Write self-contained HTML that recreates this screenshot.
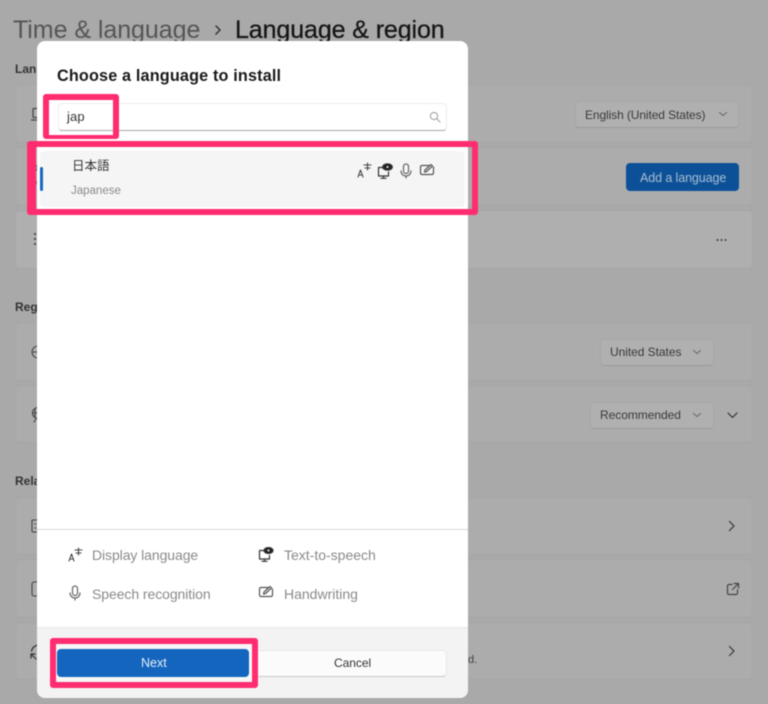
<!DOCTYPE html>
<html><head><meta charset="utf-8"><style>
html,body{margin:0;padding:0;width:768px;height:704px;overflow:hidden;background:#a9a9a9}
#r{position:absolute;left:0;top:0;width:768px;height:704px;overflow:hidden;font-family:"Liberation Sans","Noto Sans CJK JP",sans-serif;filter:blur(.5px)}
.a{position:absolute;box-sizing:border-box}
.t{position:absolute;white-space:nowrap;line-height:1}
.c{position:absolute;left:15px;width:738px;background:#acacac;border:1px solid #a5a5a5;border-radius:4px;box-sizing:border-box}
.b{position:absolute;background:#b0b0b0;border:1px solid #a6a6a6;border-bottom:1px solid #9b9b9b;border-radius:4px;box-sizing:border-box}
.p{position:absolute;box-sizing:border-box;border:6px solid #ff2d6f;border-radius:3px}
svg{position:absolute;fill:none;stroke-linecap:round;stroke-linejoin:round}
</style></head><body><div id="r">
<div class="t" style="left:13px;top:18px;font-size:25px;color:#555;letter-spacing:-.05px">Time &amp; language</div>
<svg style="left:212px;top:23px" width="12" height="14" stroke="#333" stroke-width="1.5"><path d="M4 3l4 4-4 4"/></svg>
<div class="t" style="left:235px;top:18px;font-size:25px;color:#161616;letter-spacing:-.1px;-webkit-text-stroke:.3px #161616">Language &amp; region</div>
<div class="t" style="left:15px;top:63px;font-size:12px;font-weight:bold;color:#333">Language</div>
<div class="t" style="left:15px;top:301px;font-size:12px;font-weight:bold;color:#333">Region</div>
<div class="t" style="left:15px;top:475px;font-size:12px;font-weight:bold;color:#333">Related</div>
<div class="c" style="top:84px;height:59px"></div>
<div class="c" style="top:147px;height:59px"></div>
<div class="c" style="top:210px;height:59px;background:#afafaf"></div>
<div class="c" style="top:322px;height:59px"></div>
<div class="c" style="top:385px;height:58px"></div>
<div class="c" style="top:497px;height:58px"></div>
<div class="c" style="top:559px;height:59px"></div>
<div class="c" style="top:622px;height:58px"></div>

<div class="b" style="left:575px;top:101px;width:164px;height:27px"></div>
<div class="t" style="left:585px;top:109px;font-size:12px;color:#3a3a3a;letter-spacing:-.1px">English (United States)</div>
<svg style="left:717px;top:110px" width="12" height="8" stroke="#666" stroke-width="1"><path d="M2.500 2.500l3.500 3 3.500-3"/></svg>
<div class="a" style="left:626px;top:163px;width:113px;height:28px;background:#0c5197;border-radius:4px"></div>
<div class="t" style="left:640px;top:172px;font-size:12.500px;color:#a9bdd3;letter-spacing:-.1px">Add a language</div>
<svg style="left:715px;top:237px" width="14" height="6"><circle cx="2.500" cy="3" r=".9" fill="#222"/><circle cx="6.500" cy="3" r=".9" fill="#222"/><circle cx="10.500" cy="3" r=".9" fill="#222"/></svg>

<div class="b" style="left:600px;top:339px;width:114px;height:27px"></div>
<div class="t" style="left:610px;top:346px;font-size:12px;color:#3a3a3a;letter-spacing:-.05px">United States</div>
<svg style="left:691px;top:348px" width="12" height="8" stroke="#666" stroke-width="1"><path d="M2.500 2.500l3.500 3 3.500-3"/></svg>
<div class="b" style="left:590px;top:402px;width:124px;height:27px"></div>
<div class="t" style="left:600px;top:409px;font-size:12px;color:#3a3a3a;letter-spacing:-.05px">Recommended</div>
<svg style="left:691px;top:411px" width="12" height="8" stroke="#666" stroke-width="1"><path d="M2.500 2.500l3.500 3 3.500-3"/></svg>
<svg style="left:727px;top:412px" width="11" height="7" stroke="#333" stroke-width="1.2"><path d="M1 1l4.500 4.500L10 1"/></svg>
<svg style="left:727px;top:519px" width="10" height="14" stroke="#444" stroke-width="1.3"><path d="M2.500 2.500l4.500 4.500-4.500 4.500"/></svg>
<svg style="left:726px;top:582px" width="14" height="14" stroke="#444" stroke-width="1.2"><path d="M6 2.500H3a1.500 1.500 0 0 0-1.500 1.500v7A1.500 1.500 0 0 0 3 12.500h7a1.500 1.500 0 0 0 1.500-1.500V8M8 1.500h4.500V6M12.500 1.500L6.500 7.500"/></svg>
<svg style="left:727px;top:644px" width="10" height="14" stroke="#444" stroke-width="1.3"><path d="M2.500 2.500l4.500 4.500-4.500 4.500"/></svg>

<svg style="left:30px;top:106px" width="8" height="16" stroke="#444" stroke-width="1.2"><path d="M8 2.500H4a1 1 0 0 0-1 1v7a1 1 0 0 0 1 1h4M1.500 14H8"/></svg>
<div class="t" style="left:32px;top:163px;font-size:11px;color:#444">p</div>
<div class="t" style="left:32px;top:179px;font-size:11px;color:#666">v</div>
<svg style="left:32px;top:231px" width="6" height="16"><circle cx="3" cy="3" r="1" fill="#333"/><circle cx="3" cy="8" r="1" fill="#333"/><circle cx="3" cy="13" r="1" fill="#333"/></svg>
<svg style="left:30px;top:344px" width="8" height="16" stroke="#444" stroke-width="1.1"><circle cx="8" cy="8" r="6"/><path d="M2 8h6"/></svg>
<svg style="left:30px;top:406px" width="8" height="18" stroke="#444" stroke-width="1.1"><circle cx="8" cy="7" r="5.500"/><path d="M2.500 7H8M5 3v8M6 13l-2 3"/></svg>
<svg style="left:30px;top:518px" width="8" height="16" stroke="#444" stroke-width="1.1"><path d="M8 2H3a1 1 0 0 0-1 1v10a1 1 0 0 0 1 1h5M5 6h1M5 10h1"/></svg>
<svg style="left:30px;top:580px" width="8" height="18" stroke="#444" stroke-width="1.1"><path d="M8 2H4a2 2 0 0 0-2 2v10a2 2 0 0 0 2 2h4"/></svg>
<svg style="left:29px;top:643px" width="9" height="18" stroke="#333" stroke-width="1.2"><path d="M9 2C5 3 3 5 2.500 8M2 11l5 5M2 11v4M2 11h4"/></svg>
<div class="t" style="left:468px;top:655px;font-size:11px;color:#444">d.</div>

<div class="a" style="left:37px;top:41px;width:431px;height:657px;background:#fff;border-radius:8px;overflow:hidden">
  <div class="a" style="left:0;top:488px;width:431px;height:1px;background:#d9d9d9"></div>
  <div class="a" style="left:0;top:586px;width:431px;height:71px;background:#f3f3f3;border-top:1px solid #e8e8e8"></div>
</div>
<div class="t" style="left:57px;top:68px;font-size:16.200px;font-weight:bold;color:#1a1a1a;letter-spacing:.17px">Choose a language to install</div>
<div class="a" style="left:58px;top:103px;width:389px;height:28px;background:#fff;border:1px solid #ececec;border-bottom:1px solid #a8a8a8;border-radius:4px"></div>
<div class="t" style="left:67px;top:110px;font-size:13px;color:#333;letter-spacing:.1px">jap</div>
<svg style="left:429px;top:111px" width="12" height="12" stroke="#a5a5a5" stroke-width="1.1"><circle cx="5" cy="5" r="3.600"/><path d="M7.700 7.700L11 11"/></svg>
<div class="a" style="left:40px;top:151px;width:425px;height:56px;background:#f5f5f5;border-radius:4px"></div>
<div class="a" style="left:40px;top:167px;width:3px;height:24px;background:#1568bf;border-radius:2px"></div>
<div class="t" style="left:72px;top:160px;font-size:12.500px;color:#333">日本語</div>
<div class="t" style="left:71px;top:186px;font-size:11.500px;color:#8a8a8a">Japanese</div>

<svg style="left:356px;top:162px" width="16" height="16" stroke="#444" stroke-width="1.100"><path d="M2 15l2.500-7 2.500 7M3 13h3M8 3h7M11.500 1v2M9 6h5M11.500 3v5"/></svg>
<svg style="left:377px;top:163px" width="17" height="16" stroke="#333" stroke-width="1.200"><path d="M6 4.500H1.500V13h10V9M6.500 13v2M4 15.300h5"/><ellipse cx="10.500" cy="4" rx="4.800" ry="3.200" fill="#222"/><circle cx="10.500" cy="4" r="1" fill="#fff" stroke="none"/></svg>
<svg style="left:399px;top:163px" width="14" height="16" stroke="#666" stroke-width="1.200"><rect x="4.500" y="1" width="5" height="9.500" rx="2.500"/><path d="M2 8a5 5 0 0 0 10 0M7 13v2"/></svg>
<svg style="left:419px;top:163px" width="16" height="13" stroke="#555" stroke-width="1.200"><path d="M10 2.500H3a1.500 1.500 0 0 0-1.500 1.500v6A1.500 1.500 0 0 0 3 11.500h10a1.500 1.500 0 0 0 1.500-1.500V4M5.500 9l.5-2 6-5.500 1.500 1.500-6 5.500z"/></svg>

<svg style="left:68px;top:547px" width="15" height="15" stroke="#444" stroke-width="1.100"><path d="M1 14l2.500-7 2.500 7M2 12h3M7 3h7M10.500 1v2M8 6h5M10.500 3v5"/></svg>
<div class="t" style="left:92px;top:548px;font-size:14px;color:#8a8a8a;letter-spacing:-.08px">Display language</div>
<svg style="left:258px;top:547px" width="16" height="16" stroke="#333" stroke-width="1.200"><path d="M6 3.500H1.500v8.500h10V8.500M6.500 12v2M4 14.300h5"/><ellipse cx="10.500" cy="3.500" rx="4.500" ry="3" fill="#222"/><circle cx="10.500" cy="3.500" r="1" fill="#fff" stroke="none"/></svg>
<div class="t" style="left:284px;top:548px;font-size:14px;color:#8a8a8a">Text-to-speech</div>
<svg style="left:68px;top:585px" width="14" height="16" stroke="#666" stroke-width="1.200"><rect x="4.500" y="1" width="5" height="9.500" rx="2.500"/><path d="M2 8a5 5 0 0 0 10 0M7 13v2"/></svg>
<div class="t" style="left:92px;top:587px;font-size:14px;color:#8a8a8a;letter-spacing:-.07px">Speech recognition</div>
<svg style="left:258px;top:585px" width="16" height="14" stroke="#555" stroke-width="1.200"><path d="M10 2.500H3a1.500 1.500 0 0 0-1.500 1.500v6A1.500 1.500 0 0 0 3 11.500h10a1.500 1.500 0 0 0 1.500-1.500V4M5.500 9l.5-2 6-5.500 1.500 1.500-6 5.500z"/></svg>
<div class="t" style="left:284px;top:587px;font-size:14px;color:#8a8a8a">Handwriting</div>

<div class="a" style="left:240px;top:650px;width:207px;height:27px;background:#fbfbfb;border:1px solid #e8e8e8;border-bottom:1px solid #c8c8c8;border-radius:4px"></div>
<div class="t" style="left:334px;top:657px;font-size:12px;color:#333;letter-spacing:-.05px">Cancel</div>
<div class="a" style="left:53px;top:644px;width:200px;height:37px;background:#f7f7f7"></div>
<div class="a" style="left:57px;top:649px;width:192px;height:28px;background:#1365be;border-radius:4px"></div>
<div class="t" style="left:141px;top:657px;font-size:12.500px;color:#e8f0f8">Next</div>

<div class="p" style="left:43px;top:94px;width:76px;height:45px;border-width:6px 6px 4px 6px"></div>
<div class="p" style="left:27px;top:141px;width:451px;height:74px;border-left-width:9px"></div>
<div class="p" style="left:50px;top:638px;width:208px;height:50px"></div>
</div></body></html>
